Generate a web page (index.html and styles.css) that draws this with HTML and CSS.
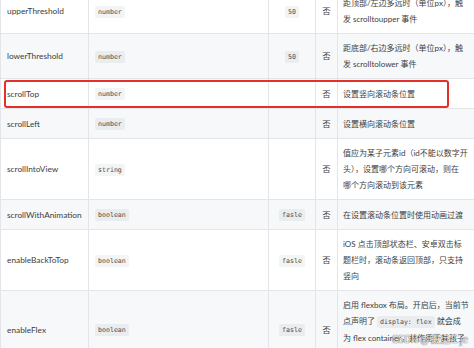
FILE: index.html
```html
<!DOCTYPE html>
<html lang="zh">
<head>
<meta charset="utf-8">
<title>scroll-view 属性</title>
<link rel="stylesheet" href="styles.css">
</head>
<body>
<div class="page">
  <table class="props">
    <colgroup>
      <col class="c-name"><col class="c-type"><col class="c-def"><col class="c-req"><col class="c-desc">
    </colgroup>
    <tbody>
      <tr>
        <td class="name">upperThreshold</td>
        <td class="type"><code>number</code></td>
        <td class="ctr"><code>50</code></td>
        <td class="ctr">否</td>
        <td class="desc">距顶部/左边多远时（单位px），触<br>发 scrolltoupper 事件</td>
      </tr>
      <tr>
        <td class="name">lowerThreshold</td>
        <td class="type"><code>number</code></td>
        <td class="ctr"><code>50</code></td>
        <td class="ctr">否</td>
        <td class="desc">距底部/右边多远时（单位px），触<br>发 scrolltolower 事件</td>
      </tr>
      <tr>
        <td class="name marked">scrollTop<span class="mark"></span></td>
        <td class="type"><code>number</code></td>
        <td class="ctr"></td>
        <td class="ctr">否</td>
        <td class="desc">设置竖向滚动条位置</td>
      </tr>
      <tr>
        <td class="name">scrollLeft</td>
        <td class="type"><code>number</code></td>
        <td class="ctr"></td>
        <td class="ctr">否</td>
        <td class="desc">设置横向滚动条位置</td>
      </tr>
      <tr>
        <td class="name">scrollIntoView</td>
        <td class="type"><code>string</code></td>
        <td class="ctr"></td>
        <td class="ctr">否</td>
        <td class="desc">值应为某子元素id（id不能以数字开<br>头），设置哪个方向可滚动，则在<br>哪个方向滚动到该元素</td>
      </tr>
      <tr>
        <td class="name">scrollWithAnimation</td>
        <td class="type"><code>boolean</code></td>
        <td class="ctr"><code>fasle</code></td>
        <td class="ctr">否</td>
        <td class="desc">在设置滚动条位置时使用动画过渡</td>
      </tr>
      <tr>
        <td class="name">enableBackToTop</td>
        <td class="type"><code>boolean</code></td>
        <td class="ctr"><code>fasle</code></td>
        <td class="ctr">否</td>
        <td class="desc">iOS 点击顶部状态栏、安卓双击标<br>题栏时，滚动条返回顶部，只支持<br>竖向</td>
      </tr>
      <tr>
        <td class="name">enableFlex</td>
        <td class="type"><code>boolean</code></td>
        <td class="ctr"><code>fasle</code></td>
        <td class="ctr">否</td>
        <td class="desc">启用 flexbox 布局。开启后，当前节<br>点声明了 <code>display: flex</code> 就会成<br>为 flex container，并作用于其孩子<br>节点。</td>
      </tr>
    </tbody>
  </table>
  <div class="watermark">CSDN @锻运工je</div>
</div>
</body>
</html>
```

FILE: styles.css
```css
html, body {
  margin: 0;
  padding: 0;
}

body {
  width: 474px;
  height: 348px;
  overflow: hidden;
  background: #ffffff;
  font-family: Lato, "Noto Sans CJK SC", sans-serif;
  font-size: 8.3px;
  color: #404040;
}

.page {
  position: relative;
  width: 474px;
  height: 348px;
  overflow: hidden;
}

.props {
  border-collapse: collapse;
  table-layout: fixed;
  width: 500px;
  margin-top: -12px;
}

.c-name { width: 88px; }
.c-type { width: 180px; }
.c-def  { width: 47px; }
.c-req  { width: 22px; }
.c-desc { width: 163px; }

.props td {
  border: 1px solid #e3e5e8;
  padding: 6px 6px;
  line-height: 16px;
  vertical-align: middle;
  white-space: nowrap;
}

.props tr:nth-child(even) td {
  background: #f6f8fa;
}

.props td.ctr {
  text-align: center;
  padding-left: 0;
  padding-right: 0;
}

.props td.desc {
  padding-left: 5px;
  padding-right: 0;
  font-size: 8px;
}

code {
  font-family: "DejaVu Sans Mono", "Liberation Mono", monospace;
  font-size: 6.6px;
  color: #4a4a4a;
  background: rgba(27, 31, 35, 0.05);
  padding: 2px 3px;
  border-radius: 2px;
}

.marked {
  position: relative;
}

.mark {
  position: absolute;
  left: 3px;
  top: 1px;
  bottom: 0;
  width: 445px;
  border: 2px solid #e4302b;
  border-radius: 3px;
  box-sizing: border-box;
}

.watermark {
  position: absolute;
  right: 6px;
  bottom: 3px;
  font-family: "Noto Sans CJK SC", sans-serif;
  font-size: 10px;
  line-height: 12px;
  color: rgba(255, 255, 255, 0.9);
  text-shadow: 0 0 1px rgba(0, 0, 0, 0.55), 0 0 1px rgba(0, 0, 0, 0.55);
}
```
